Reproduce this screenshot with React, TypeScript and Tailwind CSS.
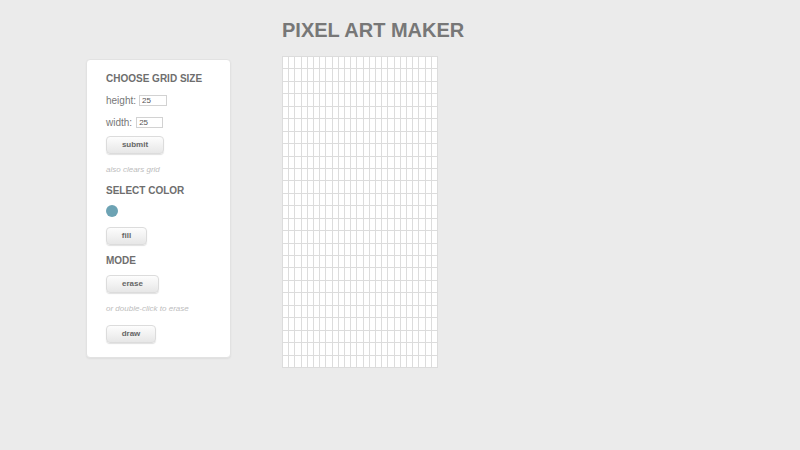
import type { JSX } from "react";

const SIZE = 25;

function Btn({ label, width }: { label: string; width: string }): JSX.Element {
  return (
    <button
      type="button"
      className={`${width} h-[18px] rounded-[4px] border border-[#dcdcdc] bg-gradient-to-b from-[#fdfdfd] to-[#e7e7e7] text-[8px] font-bold leading-none text-[#666] shadow-[0_1px_1px_rgba(0,0,0,0.12)]`}
    >
      {label}
    </button>
  );
}

function SizeInput({ width }: { width: string }): JSX.Element {
  return (
    <input
      readOnly
      value="25"
      className={`${width} h-[11px] border border-[#d2d2d2] bg-white px-[2px] text-[8px] leading-none text-[#555] outline-none`}
    />
  );
}

export default function App(): JSX.Element {
  const cells = Array.from({ length: SIZE * SIZE }, (_, i) => i);

  return (
    <div className="flex min-h-[450px] w-[800px] gap-[51px] bg-[#ebebeb] pl-[86px] font-['Liberation_Sans',Arial,sans-serif] text-[#777]">
      <aside className="mt-[59px] flex h-[299px] w-[145px] flex-col rounded-[4px] border border-[#e2e2e2] bg-white px-[19px] pt-[13px] shadow-[0_1px_2px_rgba(0,0,0,0.06)]">
        <h2 className="text-[10px] font-bold leading-[12px] text-[#6e6e6e]">
          CHOOSE GRID SIZE
        </h2>
        <label className="mt-[10px] flex h-[11px] items-center gap-[3px] text-[10px] leading-[11px]">
          height: <SizeInput width="w-[28px]" />
        </label>
        <label className="mt-[11px] flex h-[11px] items-center gap-[4px] text-[10px] leading-[11px]">
          width: <SizeInput width="w-[27px]" />
        </label>
        <div className="mt-[8px] flex">
          <Btn label="submit" width="w-[58px]" />
        </div>
        <p className="mt-[11px] text-[8px] italic leading-[10px] text-[#bdbdbd]">
          also clears grid
        </p>
        <h2 className="mt-[10px] text-[10px] font-bold leading-[12px] text-[#6e6e6e]">
          SELECT COLOR
        </h2>
        <div className="mt-[8px] h-[12px] w-[12px] rounded-full bg-[#6da3b4]" />
        <div className="mt-[10px] flex">
          <Btn label="fill" width="w-[41px]" />
        </div>
        <h2 className="mt-[10px] text-[10px] font-bold leading-[12px] text-[#6e6e6e]">
          MODE
        </h2>
        <div className="mt-[8px] flex">
          <Btn label="erase" width="w-[53px]" />
        </div>
        <p className="mt-[11px] text-[8px] italic leading-[10px] text-[#bdbdbd]">
          or double-click to erase
        </p>
        <div className="mt-[11px] flex">
          <Btn label="draw" width="w-[50px]" />
        </div>
      </aside>
      <main className="flex flex-col">
        <h1 className="mt-[18px] text-[20px] font-bold leading-[24px] text-[#777]">
          PIXEL ART MAKER
        </h1>
        <div className="mt-[14px] grid h-[312px] w-[156px] grid-cols-25 grid-rows-25 border-l border-t border-[#dcdcdc] bg-white">
          {cells.map((c) => (
            <div key={c} className="border-b border-r border-[#dcdcdc]" />
          ))}
        </div>
      </main>
    </div>
  );
}
